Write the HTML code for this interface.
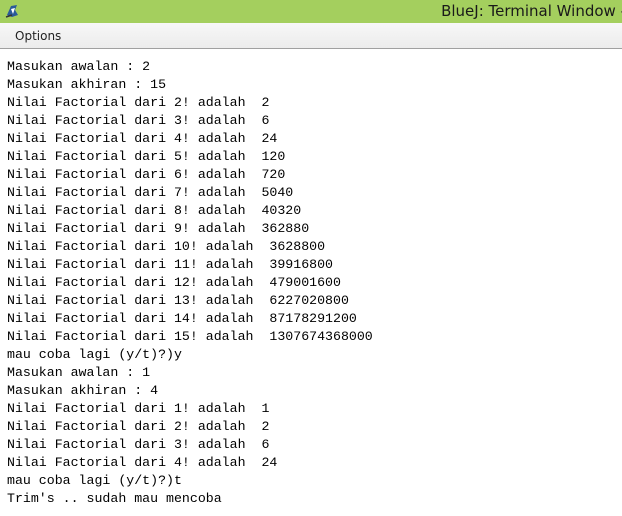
<!DOCTYPE html>
<html><head><meta charset="utf-8"><style>
html,body{margin:0;padding:0;width:622px;height:516px;overflow:hidden;background:#fff}
.title{position:absolute;left:0;top:0;width:622px;height:23px;background:#a4cf5e;overflow:hidden}
.title span{position:absolute;right:-4px;top:2px;font:15px "DejaVu Sans","Liberation Sans",sans-serif;color:#1a1a1a;white-space:nowrap}
.menu{position:absolute;left:0;top:23px;width:622px;height:25px;background:linear-gradient(#f7f7f7,#ececec);border-bottom:1px solid #a0a0a0}
.menu span{position:absolute;left:15px;top:6px;font:12px "DejaVu Sans","Liberation Sans",sans-serif;color:#222}
pre{position:absolute;left:7px;top:58px;margin:0;font:13.25px/18px "Liberation Mono","Courier New",monospace;color:#000}
</style></head><body>
<div class="title">
<svg style="position:absolute;left:4px;top:3px" width="16" height="16" viewBox="0 0 16 16"><path d="M3 12 L7 3 L13 2 L11 7 L14 12 L8 14 Z" fill="#2a5a9a"/><path d="M7 6 L11 5 L9 11 Z" fill="#fff"/><path d="M2 14 L8 12" stroke="#333" stroke-width="1.5"/></svg>
<span>BlueJ: Terminal Window -</span></div>
<div class="menu"><span>Options</span></div>
<pre>Masukan awalan : 2
Masukan akhiran : 15
Nilai Factorial dari 2! adalah  2
Nilai Factorial dari 3! adalah  6
Nilai Factorial dari 4! adalah  24
Nilai Factorial dari 5! adalah  120
Nilai Factorial dari 6! adalah  720
Nilai Factorial dari 7! adalah  5040
Nilai Factorial dari 8! adalah  40320
Nilai Factorial dari 9! adalah  362880
Nilai Factorial dari 10! adalah  3628800
Nilai Factorial dari 11! adalah  39916800
Nilai Factorial dari 12! adalah  479001600
Nilai Factorial dari 13! adalah  6227020800
Nilai Factorial dari 14! adalah  87178291200
Nilai Factorial dari 15! adalah  1307674368000
mau coba lagi (y/t)?)y
Masukan awalan : 1
Masukan akhiran : 4
Nilai Factorial dari 1! adalah  1
Nilai Factorial dari 2! adalah  2
Nilai Factorial dari 3! adalah  6
Nilai Factorial dari 4! adalah  24
mau coba lagi (y/t)?)t
Trim's .. sudah mau mencoba</pre>
</body></html>
